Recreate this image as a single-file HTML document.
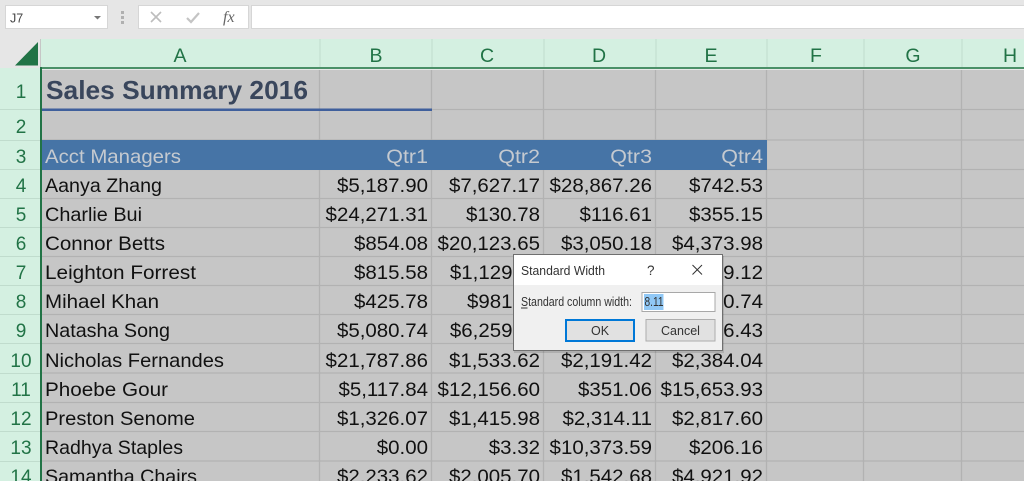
<!DOCTYPE html>
<html><head><meta charset="utf-8"><style>
html,body{margin:0;padding:0;background:#e6e6e6}
svg{display:block}
text{font-family:"Liberation Sans",sans-serif}
.h{fill:#217346;font-size:19.5px;text-anchor:middle}
.hs{fill:#217346;font-size:19px;text-anchor:middle}
.n{fill:#111;font-size:19.5px}
.v{fill:#111;font-size:19.5px;text-anchor:end}
.q{fill:#c5cad0;font-size:19.5px;text-anchor:end}
.d{fill:#333;font-size:12.5px}
</style></head><body>
<svg width="1024" height="481" viewBox="0 0 1024 481" xmlns="http://www.w3.org/2000/svg">
<rect width="1024" height="481" fill="#c6c6c6"/>
<!-- toolbar -->
<rect width="1024" height="39" fill="#e6e6e6"/>
<rect x="5.5" y="5.5" width="102" height="23" fill="#fff" stroke="#d6d6d6"/>
<text x="10" y="22.500" style="font-size:12.5px;fill:#444">J7</text>
<path d="M94 16h7l-3.500 3.500z" fill="#777"/>
<rect x="121" y="11" width="3" height="3" fill="#b0b0b0"/><rect x="121" y="16" width="3" height="3" fill="#b0b0b0"/><rect x="121" y="21" width="3" height="3" fill="#b0b0b0"/>
<rect x="138.5" y="5.5" width="110" height="23" fill="#fff" stroke="#d6d6d6"/>
<path d="M151 12l10 10M161 12l-10 10" stroke="#bdbdbd" stroke-width="1.6" fill="none"/>
<path d="M187 18l4 4 8-9" stroke="#c4c4c4" stroke-width="2.2" fill="none"/>
<text x="223" y="22" style="font-family:'Liberation Serif',serif;font-style:italic;font-size:16px;fill:#666">fx</text>
<rect x="251.5" y="5.5" width="780" height="23" fill="#fff" stroke="#d6d6d6"/>
<!-- headers -->
<rect x="41" y="39" width="983" height="29" fill="#d4f0e1"/>
<rect x="0" y="68" width="40" height="413" fill="#d4f0e1"/>
<rect x="0" y="39" width="40" height="29" fill="#e6e6e6"/>
<path d="M15 65.500L38 42V65.500z" fill="#217346"/>
<path d="M320 39v28M432 39v28M544 39v28M656 39v28M767 39v28M864 39v28M962 39v28" stroke="#c0dccd" stroke-width="1"/>
<rect x="40" y="67" width="984" height="2" fill="#4b9068"/>
<rect x="42" y="69" width="982" height="1" fill="#e8e8e8"/>
<text class="h" x="180" y="62">A</text><text class="h" x="376" y="62">B</text><text class="h" x="487" y="62">C</text><text class="h" x="599" y="62">D</text><text class="h" x="711" y="62">E</text><text class="h" x="816" y="62">F</text><text class="h" x="913" y="62">G</text><text class="h" x="1010" y="62">H</text>
<!-- row numbers -->
<path d="M0 109.500h40M0 140.500h40M0 169.500h40M0 198.500h40M0 227.500h40M0 256.500h40M0 285.500h40M0 314.500h40M0 343.500h40M0 373.500h40M0 402.500h40M0 431.500h40M0 461.500h40" stroke="#c0dccd"/>
<text class="hs" x="21" y="98">1</text><text class="hs" x="21" y="133">2</text><text class="hs" x="21" y="163">3</text><text class="hs" x="21" y="192">4</text><text class="hs" x="21" y="221">5</text><text class="hs" x="21" y="250">6</text><text class="hs" x="21" y="279">7</text><text class="hs" x="21" y="308">8</text><text class="hs" x="21" y="337">9</text><text class="hs" x="21" y="367">10</text><text class="hs" x="21" y="396">11</text><text class="hs" x="21" y="425">12</text><text class="hs" x="21" y="454">13</text><text class="hs" x="21" y="483">14</text>
<!-- grid -->
<path d="M42 109.500H1024M42 140H1024M42 169.500H1024M42 198.500H1024M42 227.500H1024M42 256.500H1024M42 285.500H1024M42 314.500H1024M42 343.500H1024M42 373H1024M42 402.500H1024M42 431.500H1024M42 461H1024" stroke="#b2b2b2" stroke-width="1.3"/>
<path d="M319.500 70V481M431.500 70V481M543.500 70V481M655.500 70V481M766.500 70V481M863.500 70V481M961.500 70V481" stroke="#b2b2b2" stroke-width="1.3"/>
<rect x="40" y="67" width="2" height="414" fill="#217346"/>
<!-- title -->
<text x="46" y="99" textLength="262" lengthAdjust="spacingAndGlyphs" style="font-size:26px;font-weight:bold;fill:#39465c">Sales Summary 2016</text>
<rect x="42" y="108.500" width="390" height="2.500" fill="#3f5f9c"/>
<!-- table head -->
<rect x="42" y="140" width="725" height="30" fill="#4674a6"/>
<text x="45" y="163" textLength="136" lengthAdjust="spacingAndGlyphs" style="font-size:19.5px;fill:#c5cad0">Acct Managers</text>
<g transform="translate(428,0) scale(1.1,1)"><text class="q" y="163">Qtr1</text></g>
<g transform="translate(540,0) scale(1.1,1)"><text class="q" y="163">Qtr2</text></g>
<g transform="translate(652,0) scale(1.1,1)"><text class="q" y="163">Qtr3</text></g>
<g transform="translate(763,0) scale(1.1,1)"><text class="q" y="163">Qtr4</text></g>
<!-- names -->
<text class="n" x="45" y="192" textLength="117" lengthAdjust="spacingAndGlyphs">Aanya Zhang</text>
<text class="n" x="45" y="221" textLength="97" lengthAdjust="spacingAndGlyphs">Charlie Bui</text>
<text class="n" x="45" y="250" textLength="120" lengthAdjust="spacingAndGlyphs">Connor Betts</text>
<text class="n" x="45" y="279" textLength="151" lengthAdjust="spacingAndGlyphs">Leighton Forrest</text>
<text class="n" x="45" y="308" textLength="114" lengthAdjust="spacingAndGlyphs">Mihael Khan</text>
<text class="n" x="45" y="337" textLength="125" lengthAdjust="spacingAndGlyphs">Natasha Song</text>
<text class="n" x="45" y="367" textLength="179" lengthAdjust="spacingAndGlyphs">Nicholas Fernandes</text>
<text class="n" x="45" y="396" textLength="123" lengthAdjust="spacingAndGlyphs">Phoebe Gour</text>
<text class="n" x="45" y="425" textLength="150" lengthAdjust="spacingAndGlyphs">Preston Senome</text>
<text class="n" x="45" y="454" textLength="138" lengthAdjust="spacingAndGlyphs">Radhya Staples</text>
<text class="n" x="45" y="483" textLength="152" lengthAdjust="spacingAndGlyphs">Samantha Chairs</text>
<!-- B -->
<g transform="translate(428,0) scale(1.05,1)">
<text class="v" y="192">$5,187.90</text><text class="v" y="221">$24,271.31</text><text class="v" y="250">$854.08</text><text class="v" y="279">$815.58</text><text class="v" y="308">$425.78</text><text class="v" y="337">$5,080.74</text><text class="v" y="367">$21,787.86</text><text class="v" y="396">$5,117.84</text><text class="v" y="425">$1,326.07</text><text class="v" y="454">$0.00</text><text class="v" y="483">$2,233.62</text>
</g>
<!-- C -->
<g transform="translate(540,0) scale(1.05,1)">
<text class="v" y="192">$7,627.17</text><text class="v" y="221">$130.78</text><text class="v" y="250">$20,123.65</text><text class="v" y="367">$1,533.62</text><text class="v" y="396">$12,156.60</text><text class="v" y="425">$1,415.98</text><text class="v" y="454">$3.32</text><text class="v" y="483">$2,005.70</text>
</g>
<g transform="translate(512.500,0) scale(1.05,1)">
<text class="v" y="279">$1,129</text><text class="v" y="308">$981</text><text class="v" y="337">$6,259</text>
</g>
<!-- D -->
<g transform="translate(652,0) scale(1.05,1)">
<text class="v" y="192">$28,867.26</text><text class="v" y="221">$116.61</text><text class="v" y="250">$3,050.18</text><text class="v" y="367">$2,191.42</text><text class="v" y="396">$351.06</text><text class="v" y="425">$2,314.11</text><text class="v" y="454">$10,373.59</text><text class="v" y="483">$1,542.68</text>
</g>
<!-- E -->
<g transform="translate(763,0) scale(1.05,1)">
<text class="v" y="192">$742.53</text><text class="v" y="221">$355.15</text><text class="v" y="250">$4,373.98</text><text class="v" y="279">9.12</text><text class="v" y="308">0.74</text><text class="v" y="337">6.43</text><text class="v" y="367">$2,384.04</text><text class="v" y="396">$15,653.93</text><text class="v" y="425">$2,817.60</text><text class="v" y="454">$206.16</text><text class="v" y="483">$4,921.92</text>
</g>
<!-- dialog -->
<rect x="514" y="256" width="210" height="97" fill="#000" opacity=".12"/>
<rect x="513.500" y="254.500" width="209" height="96" fill="#f0f0f0" stroke="#6f6f6f"/>
<rect x="514" y="255" width="208" height="30" fill="#fff"/>
<text x="521" y="275" textLength="84" lengthAdjust="spacingAndGlyphs" class="d">Standard Width</text>
<text x="647" y="275" class="d" style="font-size:13.5px">?</text>
<path d="M692.500 265l9.500 9.500M702 265l-9.500 9.500" stroke="#333" stroke-width="1" fill="none"/>
<text x="521" y="306" textLength="111" lengthAdjust="spacingAndGlyphs" class="d">Standard column width:</text>
<rect x="521" y="307.500" width="6.500" height="1" fill="#333"/>
<rect x="642" y="292.500" width="73" height="19" fill="#fff" stroke="#a8a8a8"/>
<rect x="644" y="294" width="19.500" height="16" fill="#90c8f6"/>
<text x="644.500" y="306" class="d" textLength="19" lengthAdjust="spacingAndGlyphs">8.11</text>
<rect x="566" y="320" width="68" height="21" fill="#e1e1e1" stroke="#0078d7" stroke-width="2"/>
<text x="600" y="335" class="d" text-anchor="middle">OK</text>
<rect x="646" y="319.500" width="69" height="21.500" fill="#e1e1e1" stroke="#adadad"/>
<text x="680.500" y="335" class="d" text-anchor="middle">Cancel</text>
</svg>
</body></html>
